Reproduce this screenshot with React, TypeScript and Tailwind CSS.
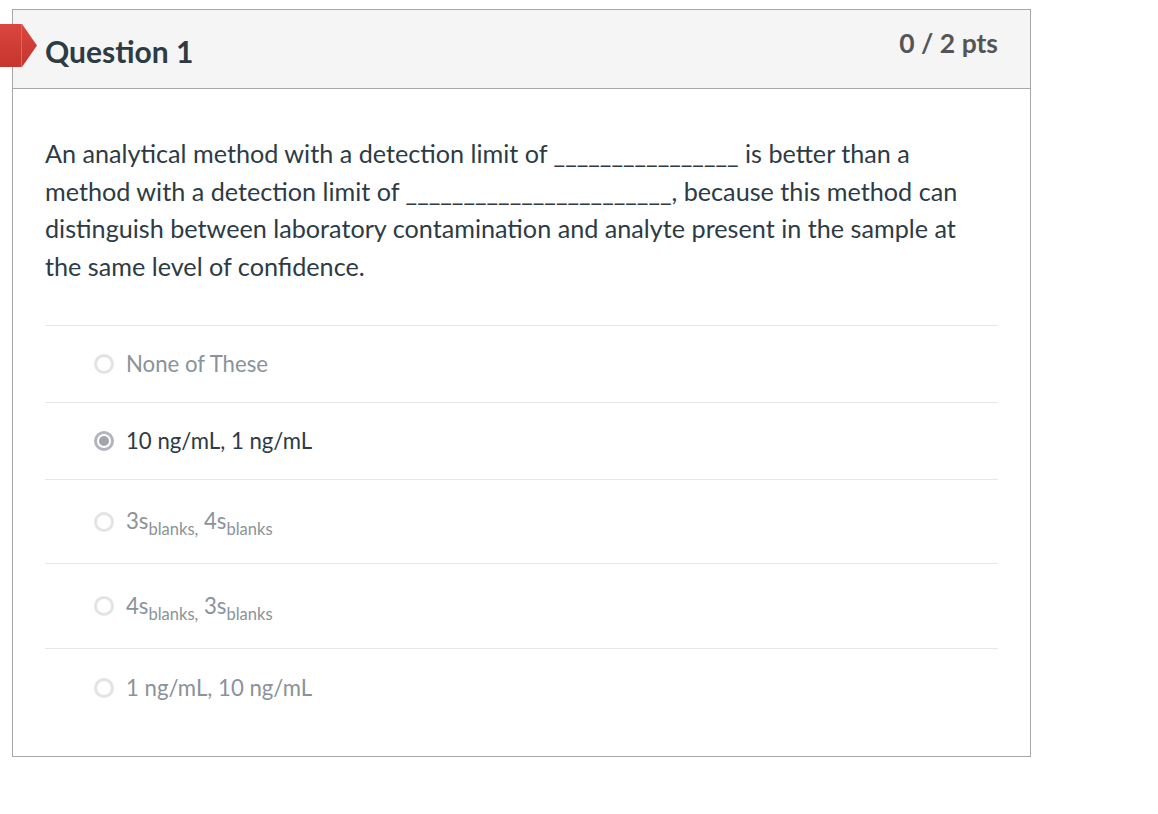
import React from 'react';

type Answer = {
  id: string;
  label: React.ReactNode;
  selected?: boolean;
  height: string;
};

// "3s" with a lowered "blanks" (comma rides along in the subscript)
const Sub = ({ base, sub }: { base: string; sub: string }) => (
  <span>
    {base}
    <span className="text-[16.5px] align-[-6px] leading-none">{sub}</span>
  </span>
);

const answers: Answer[] = [
  { id: 'a1', label: 'None of These', height: 'h-[77px]' },
  { id: 'a2', label: '10 ng/mL, 1 ng/mL', selected: true, height: 'h-[77px]' },
  {
    id: 'a3',
    label: (
      <>
        <Sub base="3s" sub="blanks," /> <Sub base="4s" sub="blanks" />
      </>
    ),
    height: 'h-[84px]',
  },
  {
    id: 'a4',
    label: (
      <>
        <Sub base="4s" sub="blanks," /> <Sub base="3s" sub="blanks" />
      </>
    ),
    height: 'h-[85px]',
  },
  { id: 'a5', label: '1 ng/mL, 10 ng/mL', height: 'h-[78px]' },
];

function Radio({ checked }: { checked?: boolean }) {
  if (checked) {
    return (
      <span className="w-[20px] h-[20px] rounded-full border-[3px] border-[#b4b4be] bg-white flex items-center justify-center shrink-0">
        <span className="w-[10px] h-[10px] rounded-full bg-[#a3a3b0]" />
      </span>
    );
  }
  return <span className="w-[20px] h-[20px] rounded-full border-[3px] border-[#e3e3e6] bg-white shrink-0" />;
}

export default function App() {
  return (
    <div className="w-[1158px] h-[814px] bg-white pt-[9px] pl-[12px] font-['Lato','Noto_Sans',sans-serif]">
      <div className="relative w-[1019px] border border-[#a8a8a8] bg-white">
        {/* wrong-answer flag */}
        <svg className="absolute left-[-13px] top-[14px]" width="38" height="43" viewBox="0 0 38 43">
          <defs>
            <linearGradient id="flag" x1="0" y1="0" x2="0" y2="1">
              <stop offset="0" stopColor="#d9473f" />
              <stop offset="1" stopColor="#c5342d" />
            </linearGradient>
          </defs>
          <polygon points="0,0 22,0 37,21.5 22,43 0,43" fill="url(#flag)" />
          <line x1="21.5" y1="0" x2="21.5" y2="43" stroke="#e2655d" strokeWidth="1" />
        </svg>

        {/* header */}
        <div className="h-[79px] bg-[#f5f5f5] border-b border-[#a8a8a8] flex justify-between pl-[32px] pr-[32px]">
          <h2 className="text-[30px] font-bold text-[#2d3b45] pt-[22px] leading-[38px]">Question 1</h2>
          <div className="text-[26.5px] font-bold text-[#555555] pt-[16px] leading-[34px]">0 / 2 pts</div>
        </div>

        {/* body */}
        <div className="px-[32px] pt-[46px] pb-[30px]">
          <p className="text-[25.2px] leading-[37.6px] text-[#2d3b45]">
            An analytical method with a detection limit of ________________ is better than a method with a
            detection limit of _______________________, because this method can distinguish between laboratory
            contamination and analyte present in the sample at the same level of confidence.
          </p>

          <div className="mt-[40px]">
            {answers.map((a) => (
              <div
                key={a.id}
                className={`${a.height} flex items-center gap-[12px] pl-[49px] border-t border-[#e6e6e6]`}
              >
                <Radio checked={a.selected} />
                <span
                  className={`text-[22.2px] leading-[30px] ${a.selected ? 'text-[#2d3b45]' : 'text-[#8b9298]'}`}
                >
                  {a.label}
                </span>
              </div>
            ))}
          </div>
        </div>
      </div>
    </div>
  );
}
